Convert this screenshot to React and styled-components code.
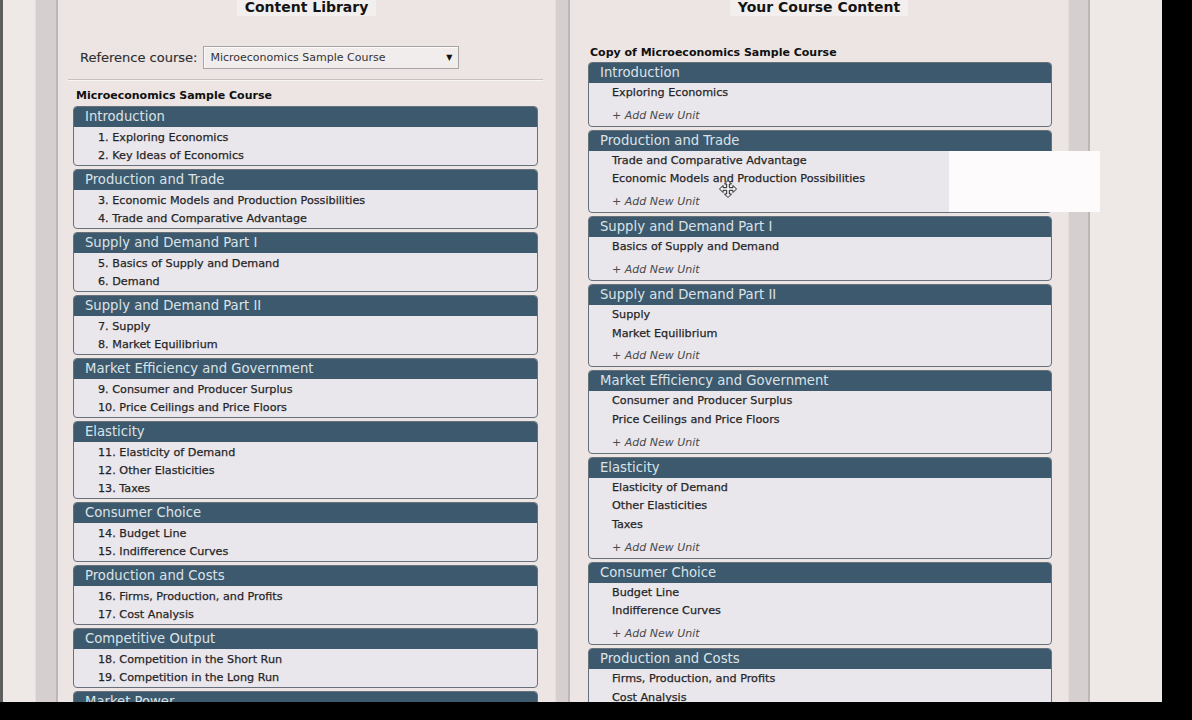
import React from "react";
import styled, { createGlobalStyle } from "styled-components";

const Global = createGlobalStyle`
  html, body { margin: 0; padding: 0; background: #000; }
  body { font-family: "DejaVu Sans", "Liberation Sans", sans-serif; }
`;

const Frame = styled.div`
  width: 1192px;
  height: 720px;
  background: #000;
  overflow: hidden;
`;

const Screen = styled.div`
  position: relative;
  width: 1162px;
  height: 702px;
  display: flex;
  overflow: hidden;
  background: #ede6e6;
`;

const EdgeDark = styled.div`
  flex: 0 0 3px;
  background: #5e5e5e;
`;

const Strip = styled.div`
  flex: 0 0 ${(p) => p.$w}px;
  background: #eee8e7;
`;

const Band = styled.div`
  flex: 0 0 ${(p) => p.$w}px;
  box-sizing: border-box;
  background: #d5cfcf;
  border-left: 1px solid #e4dede;
  border-right: 2px solid #bcb6b6;
`;

const Panel = styled.div`
  flex: 0 0 ${(p) => p.$w}px;
  display: flex;
  flex-direction: column;
  background: #ece5e4;
  overflow: hidden;
`;

const TitleRow = styled.div`
  margin-top: -2px;
  height: 18px;
  display: flex;
  justify-content: center;
`;

const Title = styled.h2`
  margin: 0;
  padding: 0 8px;
  background: #f3efee;
  font-size: 14px;
  line-height: 18px;
  font-weight: bold;
  color: #141414;
`;

const RefRow = styled.div`
  margin: 30px 0 0 22px;
  display: flex;
  align-items: center;
  gap: 6px;
  height: 23px;
`;

const RefLabel = styled.span`
  font-size: 13px;
  color: #2e2e2e;
  -webkit-text-stroke: 0.15px #333;
`;

const Select = styled.div`
  box-sizing: border-box;
  width: 256px;
  height: 23px;
  display: flex;
  align-items: center;
  justify-content: space-between;
  padding: 0 6px 0 6px;
  border: 1px solid #aaa5a5;
  background: #f1eded;
  box-shadow: inset 1px 1px 0 #fbf9f9;
  font-size: 11px;
  color: #333;
`;

const Arrow = styled.span`
  font-size: 8px;
  color: #111;
`;

const Rule = styled.div`
  margin: 10px 12px 0 10px;
  border-top: 1px solid #c6c0c0;
  border-bottom: 1px solid #f8f5f5;
`;

const CourseName = styled.div`
  margin: ${(p) => p.$top}px 0 0 ${(p) => p.$left}px;
  font-size: 11px;
  line-height: 14px;
  font-weight: bold;
  color: #101010;
`;

const SectionList = styled.div`
  margin: ${(p) => p.$top}px ${(p) => p.$right}px 0 ${(p) => p.$left}px;
  display: flex;
  flex-direction: column;
  gap: 3px;
`;

const Section = styled.div`
  flex: 0 0 auto;
  border: 1px solid #66717b;
  border-radius: 4px;
  overflow: hidden;
  background: #e9e6ec;
`;

const SectionHeader = styled.div`
  height: 20px;
  line-height: 20px;
  padding-left: 11px;
  background: #3d596d;
  color: #dbe3e8;
  font-size: 13.2px;
  white-space: nowrap;
`;

const SectionBody = styled.div`
  padding: ${(p) => (p.$editable ? "1px 0 1px" : "2px 0 0")};
`;

const Item = styled.div`
  padding-left: ${(p) => (p.$editable ? 23 : 24)}px;
  font-size: 11.2px;
  line-height: ${(p) => (p.$editable ? 18.7 : 18)}px;
  color: #1f1f1f;
  -webkit-text-stroke: 0.25px #2a2a2a;
  white-space: nowrap;
`;

const AddUnit = styled.div`
  padding: 4px 0 0 23px;
  font-size: 11px;
  line-height: 18px;
  font-style: italic;
  color: #4a4a4a;
`;

const Glare = styled.div`
  position: absolute;
  left: 949px;
  top: 151px;
  width: 151px;
  height: 61px;
  background: #fdfbfb;
`;

const Cursor = styled.svg`
  position: absolute;
  left: 719px;
  top: 180px;
`;

const library = [
  ["Introduction", ["1. Exploring Economics", "2. Key Ideas of Economics"]],
  ["Production and Trade", ["3. Economic Models and Production Possibilities", "4. Trade and Comparative Advantage"]],
  ["Supply and Demand Part I", ["5. Basics of Supply and Demand", "6. Demand"]],
  ["Supply and Demand Part II", ["7. Supply", "8. Market Equilibrium"]],
  ["Market Efficiency and Government", ["9. Consumer and Producer Surplus", "10. Price Ceilings and Price Floors"]],
  ["Elasticity", ["11. Elasticity of Demand", "12. Other Elasticities", "13. Taxes"]],
  ["Consumer Choice", ["14. Budget Line", "15. Indifference Curves"]],
  ["Production and Costs", ["16. Firms, Production, and Profits", "17. Cost Analysis"]],
  ["Competitive Output", ["18. Competition in the Short Run", "19. Competition in the Long Run"]],
  ["Market Power", ["20. Monopoly", "21. Price Discrimination"]],
];

const course = [
  ["Introduction", ["Exploring Economics"]],
  ["Production and Trade", ["Trade and Comparative Advantage", "Economic Models and Production Possibilities"]],
  ["Supply and Demand Part I", ["Basics of Supply and Demand"]],
  ["Supply and Demand Part II", ["Supply", "Market Equilibrium"]],
  ["Market Efficiency and Government", ["Consumer and Producer Surplus", "Price Ceilings and Price Floors"]],
  ["Elasticity", ["Elasticity of Demand", "Other Elasticities", "Taxes"]],
  ["Consumer Choice", ["Budget Line", "Indifference Curves"]],
  ["Production and Costs", ["Firms, Production, and Profits", "Cost Analysis"]],
];

function CourseSection({ title, items, editable }) {
  return (
    <Section>
      <SectionHeader>{title}</SectionHeader>
      <SectionBody $editable={editable}>
        {items.map((it) => (
          <Item key={it} $editable={editable}>
            {it}
          </Item>
        ))}
        {editable && <AddUnit>+ Add New Unit</AddUnit>}
      </SectionBody>
    </Section>
  );
}

export default function App() {
  return (
    <Frame>
      <Global />
      <Screen>
        <EdgeDark />
        <Strip $w={32} />
        <Band $w={23} />
        <Panel $w={497}>
          <TitleRow>
            <Title>Content Library</Title>
          </TitleRow>
          <RefRow>
            <RefLabel>Reference course:</RefLabel>
            <Select>
              <span>Microeconomics Sample Course</span>
              <Arrow>▼</Arrow>
            </Select>
          </RefRow>
          <Rule />
          <CourseName $top={8} $left={18}>Microeconomics Sample Course</CourseName>
          <SectionList $top={3} $left={15} $right={17}>
            {library.map(([t, items]) => (
              <CourseSection key={t} title={t} items={items} />
            ))}
          </SectionList>
        </Panel>
        <Band $w={15} />
        <Panel $w={498}>
          <TitleRow>
            <Title>Your Course Content</Title>
          </TitleRow>
          <CourseName $top={30} $left={20}>Copy of Microeconomics Sample Course</CourseName>
          <SectionList $top={2} $left={18} $right={16}>
            {course.map(([t, items]) => (
              <CourseSection key={t} title={t} items={items} editable />
            ))}
          </SectionList>
        </Panel>
        <Band $w={22} />
        <Strip $w={72} />
        <Glare />
        <Cursor width="18" height="18" viewBox="0 0 18 18">
          <polygon
            points="9,0.5 12.5,4 10.3,4 10.3,7.7 14,7.7 14,5.5 17.5,9 14,12.5 14,10.3 10.3,10.3 10.3,14 12.5,14 9,17.5 5.5,14 7.7,14 7.7,10.3 4,10.3 4,12.5 0.5,9 4,5.5 4,7.7 7.7,7.7 7.7,4 5.5,4"
            fill="#f4f4f4"
            stroke="#222"
            strokeWidth="1"
          />
        </Cursor>
      </Screen>
    </Frame>
  );
}
